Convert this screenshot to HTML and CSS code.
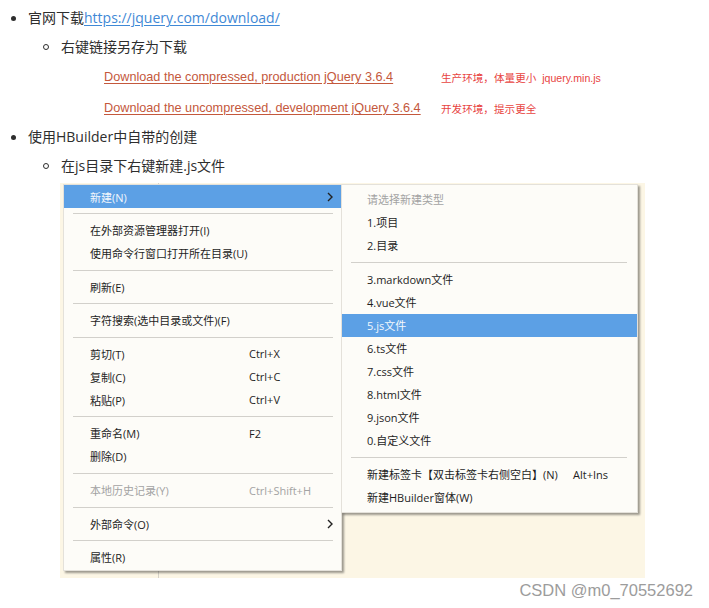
FILE: index.html
```html
<!DOCTYPE html>
<html lang="zh-CN">
<head>
<meta charset="utf-8">
<title>jQuery 下载</title>
<link rel="stylesheet" href="styles.css">
</head>
<body>
<div class="doc">
  <div class="li1"><span class="disc"></span><span>官网下载<a class="blue" href="#">https://jquery.com/download/</a></span></div>
  <div class="li2"><span class="circle"></span><span>右键链接另存为下载</span></div>
  <div class="dl dl-a"><a class="dl-link" href="#">Download the compressed, production jQuery 3.6.4</a><span class="note">生产环境，体量更小&nbsp;&nbsp;jquery.min.js</span></div>
  <div class="dl dl-b"><a class="dl-link" href="#">Download the uncompressed, development jQuery 3.6.4</a><span class="note">开发环境，提示更全</span></div>
  <div class="li1"><span class="disc"></span><span>使用HBuilder中自带的创建</span></div>
  <div class="li2"><span class="circle"></span><span>在js目录下右键新建.js文件</span></div>

  <div class="shot">
    <div class="divider"></div>
    <div class="menu">
      <div class="row active"><span class="lbl">新建(N)</span><svg class="arrow" width="6" height="10" viewBox="0 0 6 10"><path d="M1 1 L5 5 L1 9" fill="none" stroke="#222" stroke-width="1.4"/></svg></div>
      <div class="sep"></div>
      <div class="row"><span class="lbl">在外部资源管理器打开(I)</span></div>
      <div class="row"><span class="lbl">使用命令行窗口打开所在目录(U)</span></div>
      <div class="sep"></div>
      <div class="row"><span class="lbl">刷新(E)</span></div>
      <div class="sep"></div>
      <div class="row"><span class="lbl">字符搜索(选中目录或文件)(F)</span></div>
      <div class="sep"></div>
      <div class="row"><span class="lbl">剪切(T)</span><span class="key">Ctrl+X</span></div>
      <div class="row"><span class="lbl">复制(C)</span><span class="key">Ctrl+C</span></div>
      <div class="row"><span class="lbl">粘贴(P)</span><span class="key">Ctrl+V</span></div>
      <div class="sep"></div>
      <div class="row"><span class="lbl">重命名(M)</span><span class="key">F2</span></div>
      <div class="row"><span class="lbl">删除(D)</span></div>
      <div class="sep"></div>
      <div class="row disabled"><span class="lbl">本地历史记录(Y)</span><span class="key">Ctrl+Shift+H</span></div>
      <div class="sep"></div>
      <div class="row"><span class="lbl">外部命令(O)</span><svg class="arrow" width="6" height="10" viewBox="0 0 6 10"><path d="M1 1 L5 5 L1 9" fill="none" stroke="#222" stroke-width="1.4"/></svg></div>
      <div class="sep"></div>
      <div class="row"><span class="lbl">属性(R)</span></div>
    </div>
    <div class="submenu">
      <div class="srow disabled">请选择新建类型</div>
      <div class="srow">1.项目</div>
      <div class="srow">2.目录</div>
      <div class="ssep"></div>
      <div class="srow">3.markdown文件</div>
      <div class="srow">4.vue文件</div>
      <div class="srow active">5.js文件</div>
      <div class="srow">6.ts文件</div>
      <div class="srow">7.css文件</div>
      <div class="srow">8.html文件</div>
      <div class="srow">9.json文件</div>
      <div class="srow">0.自定义文件</div>
      <div class="ssep"></div>
      <div class="srow"><span class="slbl">新建标签卡【双击标签卡右侧空白】(N)</span><span>Alt+Ins</span></div>
      <div class="srow">新建HBuilder窗体(W)</div>
    </div>
  </div>

  <div class="wm">CSDN @m0_70552692</div>
</div>
</body>
</html>
```

FILE: styles.css
```css
html, body {
  margin: 0;
  padding: 0;
  background: #ffffff;
}

body {
  font-family: "Open Sans", "Noto Sans CJK SC", sans-serif;
  font-size: 14px;
  color: #2e2e2e;
  width: 709px;
  height: 608px;
  overflow: hidden;
}

.doc {
  padding-top: 4px;
}

.li1 {
  display: flex;
  align-items: center;
  height: 28px;
  line-height: 28px;
  padding-left: 11px;
}

.li2 {
  display: flex;
  align-items: center;
  height: 29px;
  line-height: 29px;
  padding-left: 43px;
}

.disc {
  width: 5px;
  height: 5px;
  border-radius: 50%;
  background: #2e2e2e;
  margin-right: 12px;
  flex: none;
}

.circle {
  width: 4px;
  height: 4px;
  border-radius: 50%;
  border: 1px solid #2e2e2e;
  margin-right: 12px;
  flex: none;
}

.blue {
  color: #3f89d6;
  text-decoration: underline;
  text-underline-offset: 2px;
}

.dl {
  display: grid;
  grid-template-columns: 337px auto;
  align-items: center;
  padding-left: 104px;
}

.dl-a {
  height: 32px;
}

.dl-b {
  height: 30px;
}

.dl-link {
  font-family: "Liberation Sans", Arial, sans-serif;
  font-size: 12.7px;
  color: #c4583c;
  text-decoration: underline;
  text-underline-offset: 2px;
  white-space: nowrap;
}

.note {
  font-family: "Liberation Sans", "Noto Sans CJK SC", sans-serif;
  font-size: 10.6px;
  color: #e8443f;
  white-space: nowrap;
}

.shot {
  position: relative;
  margin-top: 3px;
  margin-left: 60px;
  width: 585px;
  height: 395px;
  background: #fcf6e5;
  display: flex;
  align-items: flex-start;
  padding: 1px 0 0 3px;
  box-sizing: border-box;
  font-family: "Open Sans", "Noto Sans CJK SC", sans-serif;
  font-size: 11px;
  color: #1e1e1e;
}

.divider {
  position: absolute;
  left: 98px;
  top: 0;
  bottom: 0;
  width: 1px;
  background: #d6d2c8;
}

.menu {
  position: relative;
  width: 277px;
  background: #fdfcf8;
  border: 1px solid #e4e1da;
  padding-bottom: 1px;
  box-shadow: 2px 2px 2px rgba(0, 0, 0, 0.38);
  flex: none;
}

.row {
  display: flex;
  align-items: center;
  height: 23px;
  padding: 0 8px 0 26px;
  white-space: nowrap;
}

.row .lbl {
  width: 159px;
  flex: none;
}

.row .key {
  flex: none;
}

.row .arrow {
  margin-left: auto;
}

.row.active {
  background: #5ca0e5;
  color: #f2f7fc;
}

.row.disabled {
  color: #a3a3a3;
}

.sep {
  margin: 5px 8px 4.6px 9px;
  border-top: 1px solid #d2d0cb;
  border-bottom: 0;
}

.submenu {
  position: relative;
  margin-left: -1px;
  margin-top: 0;
  width: 295px;
  background: #fdfcf8;
  border: 1px solid #e4e1da;
  padding: 2.5px 0 3px;
  box-shadow: 2px 2px 2px rgba(0, 0, 0, 0.38);
  flex: none;
}

.srow {
  display: flex;
  align-items: center;
  height: 23px;
  padding-left: 25px;
  white-space: nowrap;
}

.srow .slbl {
  width: 206px;
  flex: none;
}

.srow.active {
  background: #5ca0e5;
  color: #f2f7fc;
}

.srow.disabled {
  color: #a3a3a3;
}

.ssep {
  margin: 5px 10px 5px 9px;
  border-top: 1px solid #d2d0cb;
}

.wm {
  height: 24px;
  line-height: 24px;
  text-align: right;
  padding-right: 16px;
  font-family: "Liberation Sans", Arial, sans-serif;
  font-size: 16.5px;
  color: #9c9c9c;
}
```
